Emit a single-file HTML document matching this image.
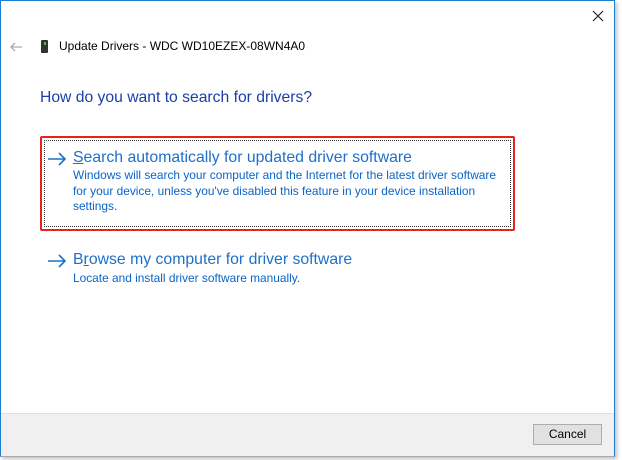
<!DOCTYPE html>
<html><head><style>
body{margin:0;width:622px;height:460px;background:#fff;position:relative;overflow:hidden;font-family:"Liberation Sans",sans-serif}
.win{position:absolute;left:0;top:0;width:613px;height:455px;border:1px solid #1a7fd4;border-bottom-color:#aaa;background:#fff;box-shadow:2px 2px 4px rgba(0,0,0,0.25)}
.foot{position:absolute;left:0;right:0;bottom:0;height:42px;background:#f0f0f0;border-top:1px solid #dfdfdf}
.t{position:absolute;white-space:nowrap}
.btn{position:absolute;left:532px;top:423px;width:67px;height:19px;border:1px solid #adadad;background:#e1e1e1;font-size:12px;text-align:center;line-height:19px;color:#000}
.lk{font-size:15.8px;color:#1e6fc9}
.ds{font-size:11.9px;color:#0a64c8;line-height:15.5px}
</style></head><body>
<div class="win">
<svg class="t" style="left:591px;top:9px" width="12" height="12"><path d="M1 1L11 11M11 1L1 11" stroke="#222" stroke-width="1.2"/></svg>
<svg class="t" style="left:8px;top:40px" width="14" height="12"><path d="M13 6H2M6 2L2 6L6 10" stroke="#aaa" stroke-width="1.3" fill="none"/></svg>
<div class="t" style="left:40px;top:39px;width:7px;height:13px;background:#333;border-radius:1px"></div>
<div class="t" style="left:43px;top:41px;width:2px;height:3px;background:#3c3"></div>
<div class="t" style="left:58px;top:38px;font-size:12px;color:#000">Update Drivers - WDC WD10EZEX-08WN4A0</div>
<div class="t" style="left:39px;top:88px;font-size:15.7px;color:#1a3fa8">How do you want to search for drivers?</div>
<div class="t" style="left:39px;top:135px;width:471px;height:91px;border:2px solid #e8221c;border-radius:2px"></div>
<div class="t" style="left:43px;top:139px;width:465px;height:85px;border:1px dotted #333"></div>
<svg class="t" style="left:46px;top:151px" width="20" height="14"><path d="M1 7H18M12 1L18 7L12 13" stroke="#1e6fc9" stroke-width="1.6" fill="none"/></svg>
<div class="t lk" style="left:72px;top:148px"><u>S</u>earch automatically for updated driver software</div>
<div class="t ds" style="left:72px;top:167px">Windows will search your computer and the Internet for the latest driver software<br>for your device, unless you've disabled this feature in your device installation<br>settings.</div>
<svg class="t" style="left:46px;top:253px" width="20" height="14"><path d="M1 7H18M12 1L18 7L12 13" stroke="#1e6fc9" stroke-width="1.6" fill="none"/></svg>
<div class="t lk" style="left:72px;top:250px">B<u>r</u>owse my computer for driver software</div>
<div class="t ds" style="left:72px;top:270px">Locate and install driver software manually.</div>
<div class="foot"></div>
<div class="btn">Cancel</div>
</div>
</body></html>
